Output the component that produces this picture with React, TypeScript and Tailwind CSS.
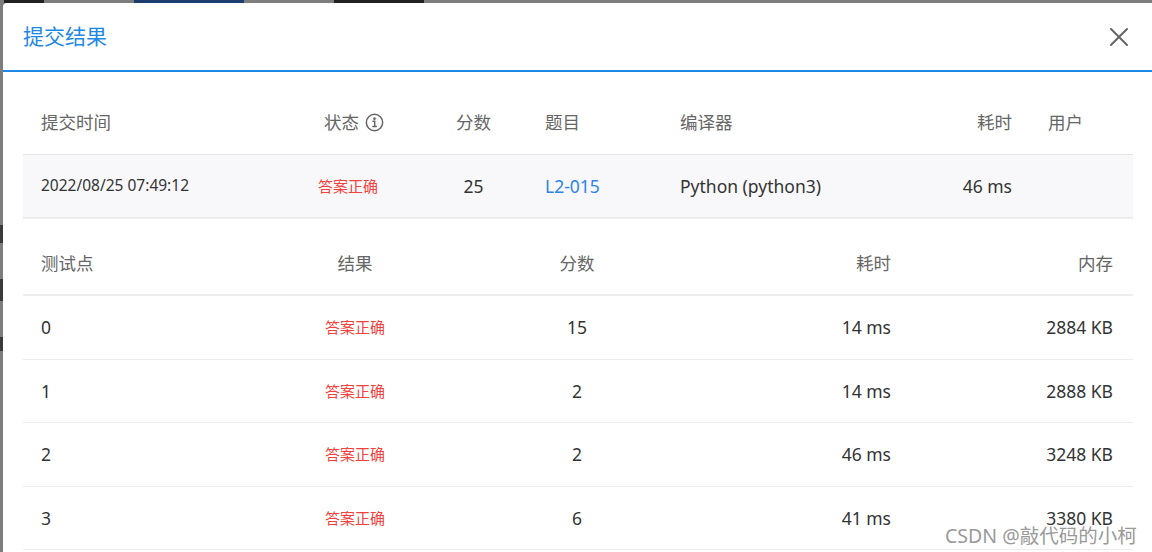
import React from "react";

const head1 = ["提交时间", "状态", "分数", "题目", "编译器", "耗时", "用户"];

const cases = [
  { id: "0", score: "15", time: "14 ms", mem: "2884 KB" },
  { id: "1", score: "2", time: "14 ms", mem: "2888 KB" },
  { id: "2", score: "2", time: "46 ms", mem: "3248 KB" },
  { id: "3", score: "6", time: "41 ms", mem: "3380 KB" },
];

function InfoIcon() {
  return (
    <svg width="19" height="19" viewBox="0 0 20 20" fill="none" stroke="#666" strokeWidth="1.6">
      <circle cx="10" cy="10" r="8.6" />
      <circle cx="10" cy="6" r="0.6" fill="#666" />
      <path d="M8.4 8.6h1.8v5.6M8.3 14.3h3.6" strokeLinecap="round" />
    </svg>
  );
}

function CloseIcon() {
  return (
    <svg width="20" height="20" viewBox="0 0 20 20" stroke="#666" strokeWidth="2" strokeLinecap="round">
      <path d="M2 2l16 16M18 2L2 18" />
    </svg>
  );
}

export default function App() {
  const font = { fontFamily: '"Noto Sans", "Noto Sans CJK SC", sans-serif' };
  const grid1 = "grid grid-cols-[257px_140px_107px_135px_238px_130px_103px]";
  const grid2 = "grid grid-cols-[227px_210px_234px_215px_224px]";
  return (
    <div className="relative w-[1152px] h-[552px] overflow-hidden bg-[#7d7d7d]" style={font}>
      {/* page behind the mask: only slivers show */}
      <div className="flex gap-[90px] pl-[4px]">
        <div className="w-[40px] h-[3px] bg-[#222]" />
        <div className="w-[110px] h-[3px] bg-[#1c3c70]" />
        <div className="w-[90px] h-[3px] bg-[#222]" />
      </div>
      <div className="flex flex-col gap-[36px] mt-[222px]">
        <div className="w-[3px] h-[18px] bg-[#3a3a3a]" />
        <div className="w-[3px] h-[22px] bg-[#3a3a3a]" />
        <div className="w-[3px] h-[14px] bg-[#3a3a3a]" />
      </div>

      {/* modal */}
      <div className="absolute left-[3px] top-[3px] w-[1152px] h-[560px] bg-white rounded-tl-[4px]">
        <div className="flex items-center justify-between h-[69px] pl-5 pr-[26px] border-b-2 border-[#1e88e5]">
          <span className="text-[21px] text-[#1e88e5]">提交结果</span>
          <CloseIcon />
        </div>

        <div className="pt-[19px] pl-5 w-[1130px]">
          {/* submission summary */}
          <div className={`${grid1} h-[64px] items-center text-[17.5px] text-[#666] border-b border-[#e6e6e8]`}>
            <div className="px-[18px]">{head1[0]}</div>
            <div className="flex items-center justify-center gap-[6px] pl-[8px]">{head1[1]}<InfoIcon /></div>
            <div className="text-center">{head1[2]}</div>
            <div className="px-[18px]">{head1[3]}</div>
            <div className="px-[18px]">{head1[4]}</div>
            <div className="px-[18px] text-right">{head1[5]}</div>
            <div className="px-[18px]">{head1[6]}</div>
          </div>
          <div className={`${grid1} h-[64px] items-center bg-[#f8f8fa] text-[17.5px] text-[#333] border-b-2 border-[#ececee]`}>
            <div className="px-[18px] text-[15.5px]">2022/08/25 07:49:12</div>
            <div className="text-center text-[15px] text-[#f5413b] pr-[4px]">答案正确</div>
            <div className="text-center">25</div>
            <div className="px-[18px] text-[#2d85e6]">L2-015</div>
            <div className="px-[18px]">Python (python3)</div>
            <div className="px-[18px] text-right">46 ms</div>
            <div className="px-[18px]"></div>
          </div>

          {/* test cases */}
          <div className={`${grid2} mt-[13px] h-[64px] items-center text-[17.5px] text-[#666] border-b-2 border-[#eeeeee]`}>
            <div className="px-[18px]">测试点</div>
            <div className="text-center">结果</div>
            <div className="text-center">分数</div>
            <div className="px-[18px] text-right">耗时</div>
            <div className="pr-5 text-right">内存</div>
          </div>
          {cases.map((c) => (
            <div key={c.id} className={`${grid2} h-[63.5px] items-center text-[17.5px] text-[#333] border-b border-[#ededed]`}>
              <div className="px-[18px]">{c.id}</div>
              <div className="text-center text-[15px] text-[#f5413b]">答案正确</div>
              <div className="text-center">{c.score}</div>
              <div className="px-[18px] text-right">{c.time}</div>
              <div className="pr-5 text-right">{c.mem}</div>
            </div>
          ))}
        </div>
      </div>

      {/* watermark */}
      <div
        className="absolute left-[945px] top-[521px] text-[19.5px] text-[#9a9a9a]"
        style={{ textShadow: "0 0 2px #fff, 0 0 2px #fff" }}
      >
        CSDN @敲代码的小柯
      </div>
    </div>
  );
}
